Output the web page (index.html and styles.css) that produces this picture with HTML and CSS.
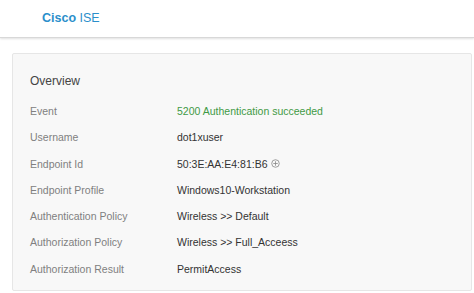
FILE: index.html
```html
<!DOCTYPE html>
<html lang="en">
<head>
    <meta charset="UTF-8">
    <title>Cisco ISE</title>
    <link rel="stylesheet" href="styles.css">
</head>
<body>
    <div class="header">
        <span class="brand"><b>Cisco</b> ISE</span>
    </div>
    <div class="card">
        <h2>Overview</h2>
        <div class="details">
            <div class="label">Event</div>
            <div class="value success">5200 Authentication succeeded</div>
            <div class="label">Username</div>
            <div class="value">dot1xuser</div>
            <div class="label">Endpoint Id</div>
            <div class="value">50:3E:AA:E4:81:B6
                <svg class="plus" width="9" height="9" viewBox="0 0 10 10">
                    <circle cx="5" cy="5" r="4.2" fill="none" stroke="#888" stroke-width="0.9"/>
                    <path d="M5 2.5v5M2.5 5h5" stroke="#888" stroke-width="0.9"/>
                </svg>
            </div>
            <div class="label">Endpoint Profile</div>
            <div class="value">Windows10-Workstation</div>
            <div class="label">Authentication Policy</div>
            <div class="value">Wireless &gt;&gt; Default</div>
            <div class="label">Authorization Policy</div>
            <div class="value">Wireless &gt;&gt; Full_Acceess</div>
            <div class="label">Authorization Result</div>
            <div class="value">PermitAccess</div>
        </div>
    </div>
</body>
</html>
```
FILE: styles.css
```css
body {
    margin: 0;
    font-family: 'Liberation Sans', Arial, sans-serif;
    background-color: #fff;
    width: 474px;
    height: 293px;
    overflow: hidden;
}

.header {
    height: 37px;
    border-bottom: 1px solid #d8d8d8;
    box-shadow: 0 1px 2px rgba(0, 0, 0, 0.12);
    display: flex;
    align-items: center;
    padding-left: 42px;
}

.brand {
    color: #2b8fcb;
    font-size: 12.5px;
    margin-top: -1px;
}

.card {
    margin: 15px 2px 0 12px;
    height: 238px;
    box-sizing: border-box;
    background-color: #f8f8f8;
    border: 1px solid #e6e6e6;
    border-radius: 2px;
    padding: 20px 17px 0;
}

h2 {
    margin: 0 0 17px;
    font-size: 12px;
    font-weight: normal;
    color: #444;
}

.details {
    display: grid;
    grid-template-columns: 147px 1fr;
    grid-auto-rows: 26.3px;
    font-size: 10.5px;
}

.label {
    color: #808080;
}

.value {
    color: #333;
}

.value.success {
    color: #3f9a45;
}

.plus {
    vertical-align: 0;
    margin-left: 1px;
}
```
